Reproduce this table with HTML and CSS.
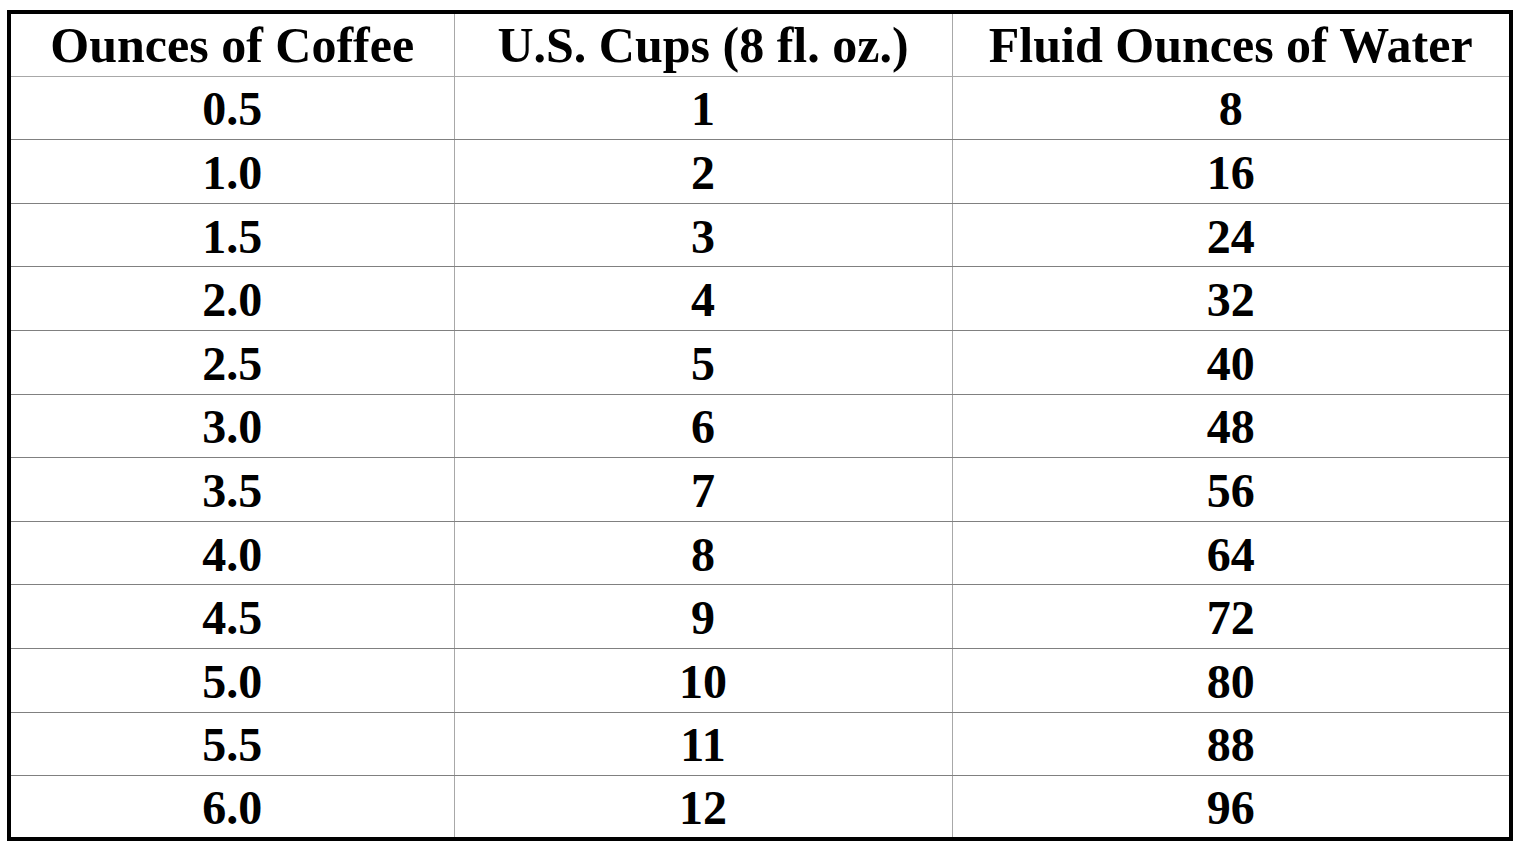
FILE: index.html
```html
<!DOCTYPE html>
<html lang="en">
<head>
<meta charset="utf-8">
<title>Coffee to Water Ratio</title>
<link rel="stylesheet" href="styles.css">
</head>
<body>
<table class="ratio">
  <colgroup>
    <col class="c1"><col class="c2"><col class="c3">
  </colgroup>
  <thead>
    <tr><th>Ounces of Coffee</th><th>U.S. Cups (8 fl. oz.)</th><th>Fluid Ounces of Water</th></tr>
  </thead>
  <tbody>
    <tr><td>0.5</td><td>1</td><td>8</td></tr>
    <tr><td>1.0</td><td>2</td><td>16</td></tr>
    <tr><td>1.5</td><td>3</td><td>24</td></tr>
    <tr><td>2.0</td><td>4</td><td>32</td></tr>
    <tr><td>2.5</td><td>5</td><td>40</td></tr>
    <tr><td>3.0</td><td>6</td><td>48</td></tr>
    <tr><td>3.5</td><td>7</td><td>56</td></tr>
    <tr><td>4.0</td><td>8</td><td>64</td></tr>
    <tr><td>4.5</td><td>9</td><td>72</td></tr>
    <tr><td>5.0</td><td>10</td><td>80</td></tr>
    <tr><td>5.5</td><td>11</td><td>88</td></tr>
    <tr><td>6.0</td><td>12</td><td>96</td></tr>
  </tbody>
</table>
</body>
</html>
```

FILE: styles.css
```css
html, body {
  margin: 0;
  background: #ffffff;
}
body {
  padding: 10px 8px 10px 7px;
  font-family: "Liberation Serif", "Times New Roman", serif;
  color: #000;
}
.ratio {
  width: 1506px;
  border-collapse: collapse;
  border: 4px solid #000;
  table-layout: fixed;
}
.ratio col.c1 { width: 445px; }
.ratio col.c2 { width: 498px; }
.ratio col.c3 { width: auto; }
.ratio th,
.ratio td {
  height: 63.6px;
  padding: 3px 0 0 0;
  box-sizing: border-box;
  text-align: center;
  vertical-align: middle;
  font-size: 48px;
  font-weight: bold;
  line-height: 1;
  border-left: 1px solid #a8a8a8;
  border-bottom: 1px solid #808080;
  white-space: nowrap;
}
.ratio th {
  height: 64.2px;
  font-size: 50px;
  font-weight: bold;
  padding-top: 0;
  border-bottom-color: #a8a8a8;
}
.ratio tr > :first-child { border-left: none; }
```
